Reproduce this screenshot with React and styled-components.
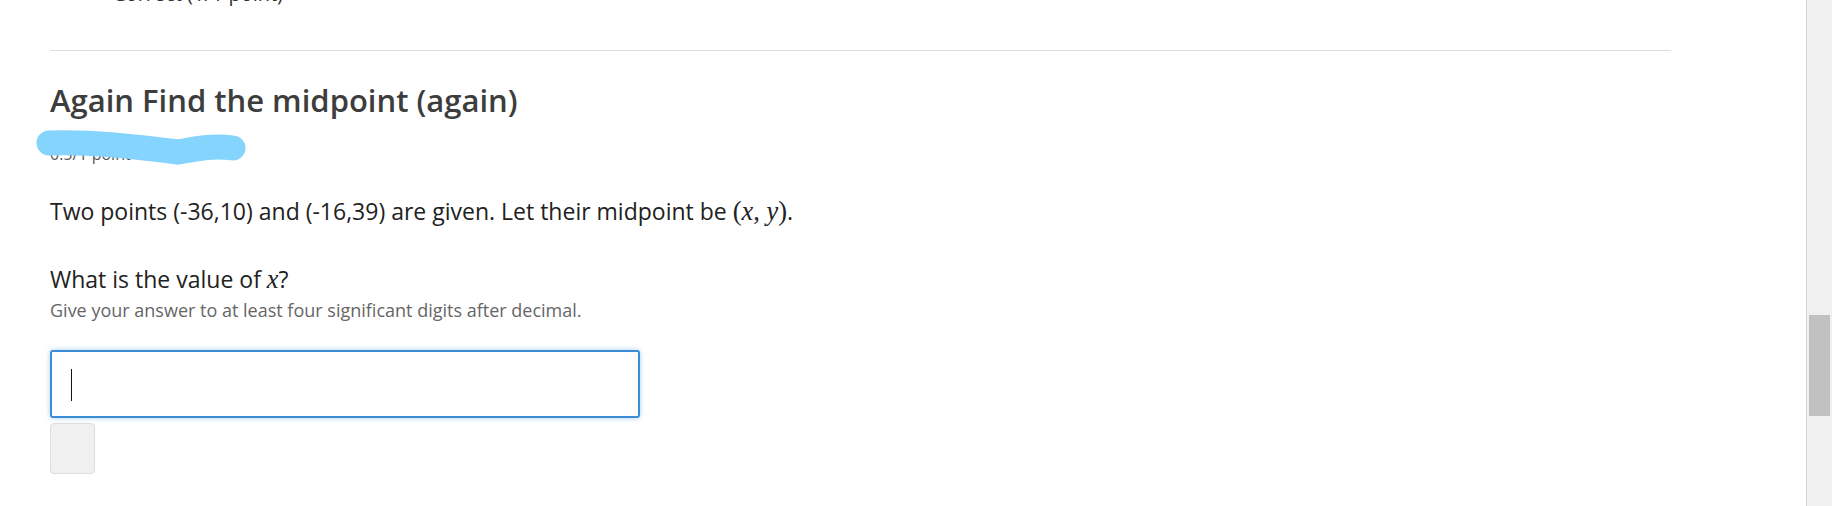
import React from 'react';
import styled, { createGlobalStyle } from 'styled-components';

const GlobalStyle = createGlobalStyle`
  html, body {
    margin: 0;
    padding: 0;
    background: #ffffff;
    overflow: hidden;
  }
  body {
    font-family: "Open Sans", "Noto Sans", sans-serif;
    color: #222222;
  }
`;

const Page = styled.div`
  display: flex;
  height: 506px;
  overflow: hidden;
`;

const Main = styled.main`
  flex: 1;
  padding: 0 135px 0 50px;
  display: flex;
  flex-direction: column;
  align-items: flex-start;
`;

const PrevResult = styled.div`
  margin: -18px 0 0 63px;
  font-size: 20px;
  line-height: 24px;
  color: #333333;
`;

const Divider = styled.div`
  align-self: stretch;
  margin-top: 44px;
  border-top: 1px solid #dedede;
`;

const Title = styled.h2`
  margin: 31px 0 0;
  font-size: 31px;
  line-height: 36px;
  font-weight: 600;
  color: #3d3d3d;
`;

const Score = styled.div`
  position: relative;
  margin-top: 26px;
  font-size: 16px;
  line-height: 20px;
  color: #555555;
`;

const Scribble = styled.svg`
  position: absolute;
  left: -20px;
  top: -19px;
  width: 220px;
  height: 45px;
`;

const Text = styled.p`
  margin: ${p => p.$top}px 0 0;
  font-size: 23px;
  line-height: 30px;
  color: #222222;
`;

const Hint = styled.div`
  margin-top: 5px;
  font-size: 18px;
  line-height: 22px;
  color: #666666;
`;

const MathInline = styled.span`
  font-family: "Liberation Serif", "Times New Roman", serif;
  font-size: 1.15em;
`;

const MathVar = styled.i`
  font-style: italic;
`;

const AnswerBox = styled.div`
  box-sizing: border-box;
  margin-top: 29px;
  width: 590px;
  height: 68px;
  border: 2px solid #3c8dd4;
  border-radius: 3px;
  box-shadow: 0 0 5px rgba(102, 175, 233, 0.6);
  padding: 17px 0 0 19px;
  background: #ffffff;
`;

const Caret = styled.span`
  display: block;
  width: 1px;
  height: 32px;
  background: #111111;
`;

const SubmitButton = styled.button`
  box-sizing: border-box;
  margin-top: 5px;
  width: 45px;
  height: 51px;
  border: 1px solid #dddddd;
  border-radius: 4px;
  background: #f0f0f0;
  padding: 0;
`;

const ScrollTrack = styled.div`
  box-sizing: border-box;
  width: 26px;
  background: #f0f0f0;
  border-left: 1px solid #d2d2d2;
  padding: 315px 2px 0 2px;
`;

const ScrollThumb = styled.div`
  height: 101px;
  background: #c1c1c1;
`;

export default function App() {
  return (
    <>
      <GlobalStyle />
      <Page>
        <Main>
          <PrevResult>Correct (1/1 point)</PrevResult>
          <Divider />
          <Title>Again Find the midpoint (again)</Title>
          <Score>
            0.5/1 point
            <Scribble viewBox="0 0 220 45">
              <path
                d="M19 18 C 60 16, 110 22, 148 27 C 165 24, 182 20, 203 23"
                fill="none"
                stroke="#84d4fd"
                strokeWidth="25"
                strokeLinecap="round"
              />
            </Scribble>
          </Score>
          <Text $top={32}>
            Two points (-36,10) and (-16,39) are given. Let their midpoint be{' '}
            <MathInline>
              (<MathVar>x</MathVar>, <MathVar>y</MathVar>)
            </MathInline>
            .
          </Text>
          <Text $top={38}>
            What is the value of{' '}
            <MathInline>
              <MathVar>x</MathVar>
            </MathInline>
            ?
          </Text>
          <Hint>Give your answer to at least four significant digits after decimal.</Hint>
          <AnswerBox>
            <Caret />
          </AnswerBox>
          <SubmitButton aria-label="Submit" />
        </Main>
        <ScrollTrack>
          <ScrollThumb />
        </ScrollTrack>
      </Page>
    </>
  );
}
